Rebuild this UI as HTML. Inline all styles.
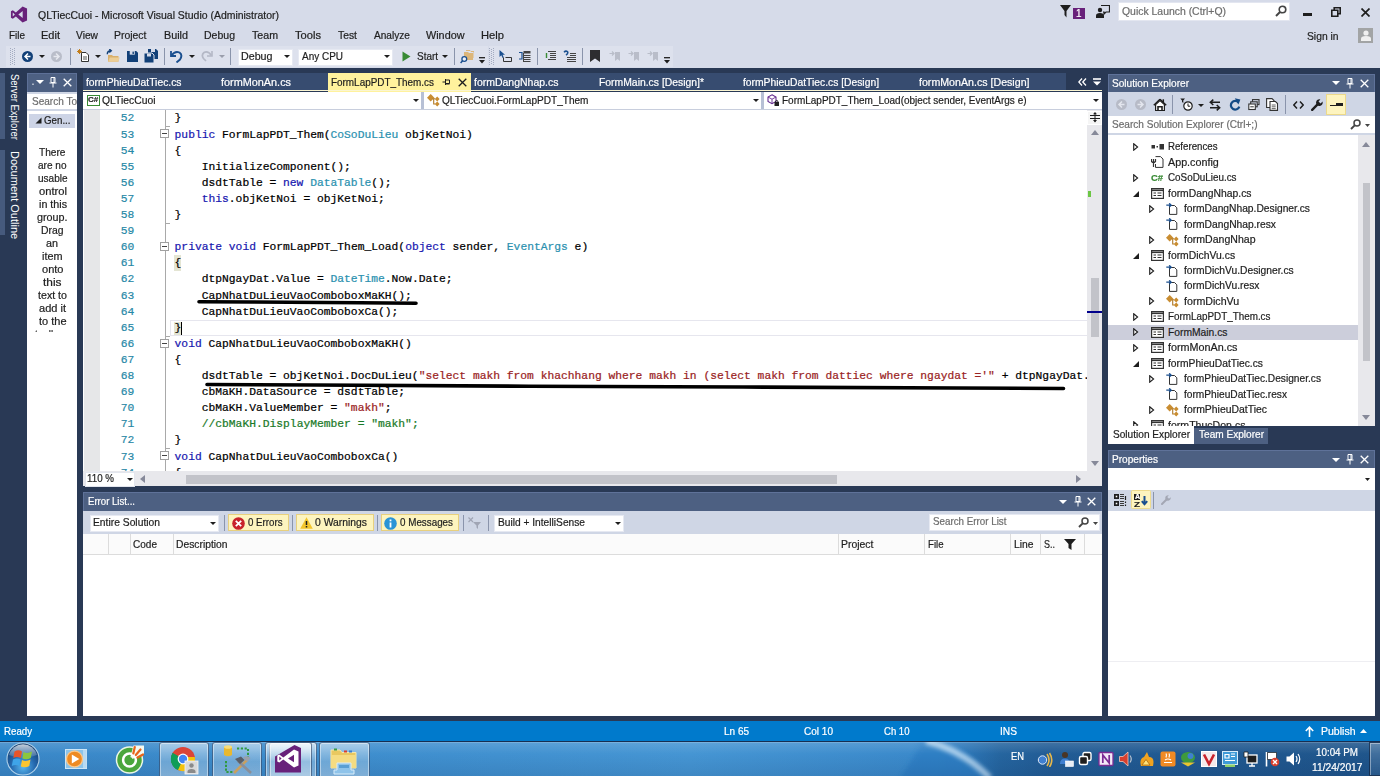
<!DOCTYPE html>
<html><head><meta charset="utf-8"><title>QLTiecCuoi - Microsoft Visual Studio (Administrator)</title>
<style>
*{box-sizing:border-box;margin:0;padding:0}
html,body{width:1380px;height:776px;overflow:hidden;background:#293955}
body{font-family:"Liberation Sans",sans-serif;font-size:11.5px;color:#1e1e1e;position:relative}
.a{position:absolute}
.t{position:absolute;white-space:pre;line-height:16px;height:16px;transform-origin:0 50%;-webkit-text-stroke:0.2px}
.ln{position:absolute;left:101px;width:33.2px;text-align:right;color:#2688a6;font-family:"Liberation Mono",monospace;font-size:11.3px;line-height:16px;height:16px;-webkit-text-stroke:0.2px}
.cl{position:absolute;left:174.6px;font-family:"Liberation Mono",monospace;font-size:11.3px;line-height:16px;height:16px;white-space:pre;color:#000;-webkit-text-stroke:0.22px}
.k{color:#1818b0}.ty{color:#2b91af}.s{color:#9a2323}.c{color:#1a7a28}
.ob{position:absolute;left:160.5px;width:9px;height:9px;border:1px solid #a0a0a0;background:#fff}
.ob:after{content:"";position:absolute;left:1px;top:3px;width:5px;height:1px;background:#444}
</style></head><body>
<div class="a" style="left:0px;top:0px;width:1380px;height:67.5px;background:#d6dbe9;"></div>
<svg class="a" style="left:9.8px;top:6px;" width="18" height="17" viewBox="0 0 19 19"><path d="M13.5 0.5 18.5 2.8V16.2L13.5 18.5 6 11.6 2.6 14.3 0.5 13.2V5.8L2.6 4.7 6 7.4Z M13.6 5.6 8.8 9.5 13.6 13.4Z M2.5 7.4V11.6L4.9 9.5Z" fill="#68217a" fill-rule="evenodd"/></svg>
<span class="t" style="left:37.50px;top:7.75px;color:#1e1e1e;font-size:10.3px;transform:scaleX(1.0156)">QLTiecCuoi - Microsoft Visual Studio (Administrator)</span>
<span class="t" style="left:8.50px;top:27.95px;color:#1e1e1e;font-size:10.3px;transform:scaleX(0.9642)">File</span>
<span class="t" style="left:40.50px;top:27.95px;color:#1e1e1e;font-size:10.3px;transform:scaleX(1.0704)">Edit</span>
<span class="t" style="left:75.50px;top:27.95px;color:#1e1e1e;font-size:10.3px;transform:scaleX(0.9936)">View</span>
<span class="t" style="left:114.00px;top:27.95px;color:#1e1e1e;font-size:10.3px;transform:scaleX(1.0136)">Project</span>
<span class="t" style="left:163.50px;top:27.95px;color:#1e1e1e;font-size:10.3px;transform:scaleX(1.0477)">Build</span>
<span class="t" style="left:204.00px;top:27.95px;color:#1e1e1e;font-size:10.3px;transform:scaleX(1.0216)">Debug</span>
<span class="t" style="left:251.50px;top:27.95px;color:#1e1e1e;font-size:10.3px;transform:scaleX(1.0323)">Team</span>
<span class="t" style="left:294.50px;top:27.95px;color:#1e1e1e;font-size:10.3px;transform:scaleX(1.0812)">Tools</span>
<span class="t" style="left:337.50px;top:27.95px;color:#1e1e1e;font-size:10.3px;transform:scaleX(1.0058)">Test</span>
<span class="t" style="left:373.50px;top:27.95px;color:#1e1e1e;font-size:10.3px;transform:scaleX(0.9825)">Analyze</span>
<span class="t" style="left:426.00px;top:27.95px;color:#1e1e1e;font-size:10.3px;transform:scaleX(1.0512)">Window</span>
<span class="t" style="left:480.50px;top:27.95px;color:#1e1e1e;font-size:10.3px;transform:scaleX(1.0855)">Help</span>
<svg class="a" style="left:1060px;top:5px;" width="12" height="13" viewBox="0 0 12 13"><path d="M0 0H11L6.5 6V12.5L4.5 10V6Z" fill="#1e1e1e"/></svg>
<div class="a" style="left:1073px;top:8px;width:12px;height:11px;background:#68217a;"></div>
<span class="t" style="left:1076.00px;top:5.95px;color:#fff;font-size:10px;transform:scaleX(0.9888)">1</span>
<svg class="a" style="left:1096px;top:5px;" width="14" height="13" viewBox="0 0 14 13"><path d="M5 0.5H13.5V7H10L8 9V7H7" fill="none" stroke="#1e1e1e" stroke-width="1.2"/><circle cx="4" cy="5" r="2.2" fill="#1e1e1e"/><path d="M0 13V10.5Q0 8 4 8Q8 8 8 10.5V13Z" fill="#1e1e1e"/></svg>
<div class="a" style="left:1118px;top:2px;width:172px;height:19px;background:#fff;border:1px solid #e3e6f0"></div>
<span class="t" style="left:1122.00px;top:4.25px;color:#6d6d6d;font-size:10.3px;transform:scaleX(1.0125)">Quick Launch (Ctrl+Q)</span>
<svg class="a" style="left:1275px;top:5px;" width="12" height="12" viewBox="0 0 12 12"><circle cx="7.5" cy="4.5" r="3.3" fill="none" stroke="#444" stroke-width="1.6"/><path d="M5 7L1 11" stroke="#444" stroke-width="2"/></svg>
<div class="a" style="left:1303px;top:13px;width:8.5px;height:2.5px;background:#1e1e1e;"></div>
<svg class="a" style="left:1331px;top:7px;" width="10" height="10" viewBox="0 0 10 10"><path d="M0.8 3.2H6.8V9.2H0.8Z M3.2 3V0.8H9.2V6.8H7" fill="none" stroke="#1e1e1e" stroke-width="1.6"/></svg>
<svg class="a" style="left:1361px;top:8px;" width="9" height="9" viewBox="0 0 9 9"><path d="M0.5 0.5 8.5 8.5M8.5 0.5 0.5 8.5" stroke="#1e1e1e" stroke-width="1.7"/></svg>
<span class="t" style="left:1306.50px;top:29.05px;color:#1e1e1e;font-size:10.3px;transform:scaleX(1.0005)">Sign in</span>
<div class="a" style="left:1358px;top:28px;width:15px;height:15px;background:#a2a4a5;"></div>
<svg class="a" style="left:1358px;top:28px;" width="15" height="15" viewBox="0 0 15 15"><circle cx="8" cy="5" r="2.6" fill="#f0f0f0"/><path d="M3 13V10.5Q3 8 8 8Q13 8 13 10.5V13Z" fill="#f0f0f0"/></svg>
<div class="a" style="left:6px;top:46px;width:482px;height:21px;background:#dde1ed;"></div>
<div class="a" style="left:488.5px;top:46px;width:184px;height:21px;background:#dde1ed;"></div>
<svg class="a" style="left:10px;top:48px;" width="5" height="17" viewBox="0 0 5 17"><path d="M0.5 0V17M4.5 0V17" stroke="#a3abc0" stroke-width="1" stroke-dasharray="1 1"/><path d="M2.5 1V17" stroke="#a3abc0" stroke-width="1" stroke-dasharray="1 1"/></svg>
<svg class="a" style="left:489px;top:48px;" width="5" height="17" viewBox="0 0 5 17"><path d="M0.5 0V17M4.5 0V17" stroke="#a3abc0" stroke-width="1" stroke-dasharray="1 1"/><path d="M2.5 1V17" stroke="#a3abc0" stroke-width="1" stroke-dasharray="1 1"/></svg>
<svg class="a" style="left:22px;top:50.5px;" width="11" height="11" viewBox="0 0 11 11"><circle cx="5.5" cy="5.5" r="5.5" fill="#124078"/><path d="M6 2.5 3 5.5 6 8.5M3.2 5.5H8.5" stroke="#fff" stroke-width="1.5" fill="none"/></svg>
<svg class="a" style="left:39.0px;top:55.0px;" width="6" height="3" viewBox="0 0 6 3"><path d="M0 0H6L3.0 3Z" fill="#1e1e1e"/></svg>
<svg class="a" style="left:51px;top:50.5px;" width="11" height="11" viewBox="0 0 11 11"><circle cx="5.5" cy="5.5" r="5.5" fill="#b9bdc9"/><path d="M5 2.5 8 5.5 5 8.5M7.8 5.5H2.5" stroke="#e6e8ef" stroke-width="1.5" fill="none"/></svg>
<div class="a" style="left:69.5px;top:48px;width:1px;height:17px;background:#8a94ab;"></div>
<svg class="a" style="left:77px;top:49px;" width="13" height="14" viewBox="0 0 13 14"><path d="M4.5 3.5H9L11.5 6V12.5H4.5Z" fill="#fff" stroke="#333" stroke-width="1"/><path d="M6 8H10M6 10H10" stroke="#555" stroke-width="1"/><path d="M2.5 0V5M0 2.5H5M0.8 0.8 4.2 4.2M4.2 0.8 0.8 4.2" stroke="#c27d1a" stroke-width="1"/></svg>
<svg class="a" style="left:95.0px;top:55.0px;" width="6" height="3" viewBox="0 0 6 3"><path d="M0 0H6L3.0 3Z" fill="#1e1e1e"/></svg>
<svg class="a" style="left:106px;top:49px;" width="14" height="14" viewBox="0 0 14 14"><path d="M2 6H6L7 7H12.5V12.8H2Z" fill="#d9b06c"/><path d="M3.8 8.5H13.8L12 12.8H2Z" fill="#ecce96"/><path d="M1.3 5.2Q1.3 1.8 5 1.8M3.3 0 5.3 1.8 3.3 3.6" fill="none" stroke="#124078" stroke-width="1.4"/></svg>
<svg class="a" style="left:127px;top:50.5px;" width="11" height="11" viewBox="0 0 12 12"><path d="M0 0H10L12 2V12H0Z" fill="#124078"/><rect x="3" y="0" width="5.5" height="4" fill="#d6dbe9"/><rect x="6" y="0.7" width="1.5" height="2.6" fill="#124078"/><rect x="2.5" y="7" width="7" height="5" fill="#124078"/></svg>
<svg class="a" style="left:144px;top:49px;" width="14" height="14" viewBox="0 0 14 14"><path d="M4 0H12L14 2V10H4Z" fill="#124078"/><rect x="7" y="0" width="4" height="3" fill="#d6dbe9"/><path d="M0 4H8L10 6V14H0Z" fill="#124078" stroke="#dde1ed" stroke-width="1"/><rect x="3" y="4.5" width="4" height="3" fill="#d6dbe9"/></svg>
<div class="a" style="left:163.5px;top:48px;width:1px;height:17px;background:#8a94ab;"></div>
<svg class="a" style="left:170px;top:49.5px;" width="13" height="13" viewBox="0 0 13 13"><path d="M1 1V6H6" fill="none" stroke="#1a4f8f" stroke-width="1.8"/><path d="M1.5 5.5Q5 0.5 9.5 2.5Q13 5 10 9.5L6.5 12.5" fill="none" stroke="#1a4f8f" stroke-width="1.9"/></svg>
<svg class="a" style="left:189.0px;top:55.0px;" width="6" height="3" viewBox="0 0 6 3"><path d="M0 0H6L3.0 3Z" fill="#1e1e1e"/></svg>
<svg class="a" style="left:201px;top:50px;" width="12" height="12" viewBox="0 0 12 12"><path d="M11 1V6H6" fill="none" stroke="#b4b8c6" stroke-width="1.6"/><path d="M10.5 5.5Q7 0.5 3 2.5Q0 5 2.5 8.5L5 11" fill="none" stroke="#b4b8c6" stroke-width="1.7"/></svg>
<svg class="a" style="left:219.0px;top:55.0px;" width="6" height="3" viewBox="0 0 6 3"><path d="M0 0H6L3.0 3Z" fill="#9a9eac"/></svg>
<div class="a" style="left:230px;top:48px;width:1px;height:17px;background:#8a94ab;"></div>
<div class="a" style="left:237.5px;top:48.5px;width:55px;height:17px;background:#fff;border:1px solid #e6e9f2"></div>
<span class="t" style="left:240.50px;top:49.05px;color:#1e1e1e;font-size:10.3px;transform:scaleX(1.0381)">Debug</span>
<svg class="a" style="left:284.0px;top:55.0px;" width="6" height="3" viewBox="0 0 6 3"><path d="M0 0H6L3.0 3Z" fill="#1e1e1e"/></svg>
<div class="a" style="left:298px;top:48.5px;width:95px;height:17px;background:#fff;border:1px solid #e6e9f2"></div>
<span class="t" style="left:301.50px;top:49.05px;color:#1e1e1e;font-size:10.3px;transform:scaleX(0.9679)">Any CPU</span>
<svg class="a" style="left:384.0px;top:55.0px;" width="6" height="3" viewBox="0 0 6 3"><path d="M0 0H6L3.0 3Z" fill="#1e1e1e"/></svg>
<svg class="a" style="left:402px;top:51px;" width="9" height="11" viewBox="0 0 9 11"><path d="M0.5 0.5 8.5 5.5 0.5 10.5Z" fill="#388a34"/></svg>
<span class="t" style="left:416.50px;top:49.05px;color:#1e1e1e;font-size:10.3px;transform:scaleX(0.9655)">Start</span>
<svg class="a" style="left:442.0px;top:55.0px;" width="6" height="3" viewBox="0 0 6 3"><path d="M0 0H6L3.0 3Z" fill="#1e1e1e"/></svg>
<div class="a" style="left:453.5px;top:48px;width:1px;height:17px;background:#8a94ab;"></div>
<svg class="a" style="left:460px;top:49.5px;" width="14" height="14" viewBox="0 0 14 14"><path d="M4 2H8L9 3H13V10H4Z" fill="#dcb67a"/><path d="M6 0.5H10L11 1.5H14V8" fill="none" stroke="#dcb67a" stroke-width="1"/><circle cx="4.3" cy="9" r="2.4" fill="#eef1f8" stroke="#1a4f8f" stroke-width="1.3"/><path d="M2.6 10.8 0.6 13" stroke="#1a4f8f" stroke-width="1.5"/></svg>
<svg class="a" style="left:479px;top:57px;" width="6" height="7" viewBox="0 0 6 7"><path d="M0 0.7H6" stroke="#1e1e1e" stroke-width="1.3"/><path d="M0 3H6L3 6.5Z" fill="#1e1e1e"/></svg>
<svg class="a" style="left:499px;top:49.5px;" width="13" height="13" viewBox="0 0 13 13"><path d="M0.5 0 0.5 7 2.3 5.2 3.6 8 4.8 7.4 3.6 4.8 6 4.8Z" fill="#1a4f8f"/><path d="M4.5 7.5V11.5H12.5V7.5H6.5" fill="none" stroke="#333" stroke-width="1"/></svg>
<svg class="a" style="left:518px;top:49.5px;" width="13" height="13" viewBox="0 0 13 13"><path d="M1 2.5H4V9H1" fill="none" stroke="#1a4f8f" stroke-width="1.2"/><rect x="5.5" y="1" width="7" height="2.5" fill="#444"/><path d="M6 5.5H12.5M6 7.5H12.5M6 9.5H12.5M6 11.5H12.5" stroke="#444" stroke-width="1"/><path d="M5.5 3V12" stroke="#444" stroke-width="1"/></svg>
<div class="a" style="left:537px;top:48px;width:1px;height:17px;background:#8a94ab;"></div>
<svg class="a" style="left:545px;top:50px;" width="11" height="12" viewBox="0 0 11 12"><path d="M3 1.5H11M5 3.5H11M5 5.5H11M5 7.5H11M3 9.5H11" stroke="#444" stroke-width="1"/><path d="M1.5 3V8" stroke="#388a34" stroke-width="1.4"/></svg>
<svg class="a" style="left:563px;top:49.5px;" width="13" height="13" viewBox="0 0 13 13"><path d="M1 2.2Q2.8 0.2 4.6 1.8Q5.4 3.4 3 5.2" fill="none" stroke="#1a4f8f" stroke-width="1.5"/><path d="M7 3.5H13M7 5.5H13M4 7.5H13M4 9.5H13M4 11.5H13" stroke="#444" stroke-width="1"/></svg>
<div class="a" style="left:581.5px;top:48px;width:1px;height:17px;background:#8a94ab;"></div>
<svg class="a" style="left:590px;top:50px;" width="10" height="12" viewBox="0 0 10 12"><path d="M0 0H10V12L5 8.5 0 12Z" fill="#2d2d30"/></svg>
<svg class="a" style="left:609px;top:50px;" width="11" height="11" viewBox="0 0 11 11"><path d="M6 2V11L8.5 9 11 11V2Z" fill="#b9bdc9"/><path d="M0.5 3.5H5M3 1.5 5 3.5 3 5.5" fill="none" stroke="#b9bdc9" stroke-width="1.2"/></svg>
<svg class="a" style="left:628px;top:50px;" width="11" height="11" viewBox="0 0 11 11"><path d="M6 2V11L8.5 9 11 11V2Z" fill="#b9bdc9"/><path d="M0.5 3.5H5M3 1.5 5 3.5 3 5.5" fill="none" stroke="#b9bdc9" stroke-width="1.2"/></svg>
<svg class="a" style="left:647px;top:50px;" width="11" height="11" viewBox="0 0 11 11"><path d="M6 2V11L8.5 9 11 11V2Z" fill="#b9bdc9"/><path d="M0.5 3.5H5M3 1.5 5 3.5 3 5.5" fill="none" stroke="#b9bdc9" stroke-width="1.2"/></svg>
<svg class="a" style="left:664px;top:57px;" width="6" height="7" viewBox="0 0 6 7"><path d="M0 0.7H6" stroke="#1e1e1e" stroke-width="1.3"/><path d="M0 3H6L3 6.5Z" fill="#1e1e1e"/></svg>
<div class="a" style="left:0px;top:72.5px;width:5px;height:66.5px;background:#465a7d;"></div>
<div class="a" style="left:0px;top:149.8px;width:5px;height:85px;background:#465a7d;"></div>
<span class="a" style="left:21.5px;top:73.5px;white-space:nowrap;color:#fff;font-size:10.3px;line-height:16px;height:16px;transform-origin:0 0;transform:rotate(90deg) scaleX(0.92)">Server Explorer</span>
<span class="a" style="left:21.5px;top:150.5px;white-space:nowrap;color:#fff;font-size:10.3px;line-height:16px;height:16px;transform-origin:0 0;transform:rotate(90deg) scaleX(1.07)">Document Outline</span>
<div class="a" style="left:27px;top:73.5px;width:50.4px;height:642.7px;background:#fff;"></div>
<div class="a" style="left:27px;top:73.2px;width:50.4px;height:18.8px;background:#4d6082;border:1px solid #5d7097;border-bottom:0"></div>
<span class="t" style="left:31.50px;top:74.45px;color:#fff;font-size:10.3px;transform:scaleX(0.6957)">.</span>
<svg class="a" style="left:35.5px;top:80.0px;" width="8" height="4" viewBox="0 0 8 4"><path d="M0 0H8L4.0 4Z" fill="#fff"/></svg>
<svg class="a" style="left:49px;top:77px;" width="8" height="11" viewBox="0 0 8 11"><path d="M2 0.5H6V5.5H2ZM5 0.5V5.5M0.5 6H7.5M4 6V10.5" stroke="#fff" stroke-width="1" fill="none"/></svg>
<svg class="a" style="left:63px;top:78px;" width="9" height="9" viewBox="0 0 9 9"><path d="M0.7 0.7 8.3 8.3M8.3 0.7 0.7 8.3" stroke="#fff" stroke-width="1.3"/></svg>
<div class="a" style="left:27px;top:92px;width:50.4px;height:1.5px;background:#cfd6e5;"></div>
<span class="t" style="left:31.50px;top:94.05px;color:#6d6d6d;font-size:10.3px;transform:scaleX(0.9743)">Search To</span>
<div class="a" style="left:27px;top:109px;width:50.4px;height:2px;background:#cfd6e5;"></div>
<div class="a" style="left:29px;top:113.5px;width:45.8px;height:14.5px;background:#cdd4e6;"></div>
<svg class="a" style="left:35px;top:117px;" width="7" height="7" viewBox="0 0 7 7"><path d="M6.5 0.5V6.5H0.5Z" fill="#1e1e1e"/></svg>
<span class="t" style="left:43.50px;top:113.45px;color:#1e1e1e;font-size:10.3px;transform:scaleX(0.9448)">Gen...</span>
<span class="t" style="left:39.00px;top:145.45px;color:#1e1e1e;font-size:10.3px;transform:scaleX(0.9849)">There</span>
<span class="t" style="left:38.00px;top:158.40px;color:#1e1e1e;font-size:10.3px;transform:scaleX(0.9759)">are no</span>
<span class="t" style="left:37.50px;top:171.35px;color:#1e1e1e;font-size:10.3px;transform:scaleX(0.9722)">usable</span>
<span class="t" style="left:38.50px;top:184.30px;color:#1e1e1e;font-size:10.3px;transform:scaleX(1.0867)">ontrol</span>
<span class="t" style="left:38.50px;top:197.25px;color:#1e1e1e;font-size:10.3px;transform:scaleX(1.0407)">in this</span>
<span class="t" style="left:37.00px;top:210.20px;color:#1e1e1e;font-size:10.3px;transform:scaleX(1.0444)">group.</span>
<span class="t" style="left:41.00px;top:223.15px;color:#1e1e1e;font-size:10.3px;transform:scaleX(1.0077)">Drag</span>
<span class="t" style="left:46.00px;top:236.10px;color:#1e1e1e;font-size:10.3px;transform:scaleX(1.0463)">an</span>
<span class="t" style="left:42.00px;top:249.05px;color:#1e1e1e;font-size:10.3px;transform:scaleX(1.0538)">item</span>
<span class="t" style="left:41.50px;top:262.00px;color:#1e1e1e;font-size:10.3px;transform:scaleX(1.0725)">onto</span>
<span class="t" style="left:43.00px;top:274.95px;color:#1e1e1e;font-size:10.3px;transform:scaleX(1.154)">this</span>
<span class="t" style="left:37.50px;top:287.90px;color:#1e1e1e;font-size:10.3px;transform:scaleX(1.034)">text to</span>
<span class="t" style="left:39.00px;top:300.85px;color:#1e1e1e;font-size:10.3px;transform:scaleX(1.0713)">add it</span>
<span class="t" style="left:38.50px;top:313.80px;color:#1e1e1e;font-size:10.3px;transform:scaleX(1.0673)">to the</span>
<div class="a" style="left:28px;top:322px;width:49px;height:9.6px;overflow:hidden"><div class="a" style="left:-28px;top:-322px;width:1380px;height:776px">
<span class="t" style="left:35.00px;top:326.75px;color:#1e1e1e;font-size:10.3px;transform:scaleX(0.9563)">toolbox.</span>
</div></div>
<div class="a" style="left:82.5px;top:73px;width:983.5px;height:17px;background:#374c70;"></div>
<div class="a" style="left:328px;top:73px;width:143.2px;height:18.5px;background:#fff29d;"></div>
<div class="a" style="left:82.5px;top:89.8px;width:1019.5px;height:1.7px;background:#faf5d2;"></div>
<span class="t" style="left:86.00px;top:74.85px;color:#fff;font-size:10.3px;transform:scaleX(1.0033)">formPhieuDatTiec.cs</span>
<span class="t" style="left:221.00px;top:74.85px;color:#fff;font-size:10.3px;transform:scaleX(1.0544)">formMonAn.cs</span>
<span class="t" style="left:474.00px;top:74.85px;color:#fff;font-size:10.3px;transform:scaleX(1.0183)">formDangNhap.cs</span>
<span class="t" style="left:598.50px;top:74.85px;color:#fff;font-size:10.3px;transform:scaleX(1.0083)">FormMain.cs [Design]*</span>
<span class="t" style="left:743.00px;top:74.85px;color:#fff;font-size:10.3px;transform:scaleX(1.0013)">formPhieuDatTiec.cs [Design]</span>
<span class="t" style="left:918.50px;top:74.85px;color:#fff;font-size:10.3px;transform:scaleX(1.0326)">formMonAn.cs [Design]</span>
<span class="t" style="left:331.00px;top:74.85px;color:#1e1e1e;font-size:10.3px;transform:scaleX(0.9625)">FormLapPDT_Them.cs</span>
<svg class="a" style="left:442px;top:78px;" width="9" height="8" viewBox="0 0 9 8"><path d="M0.5 4H3.5M3.5 1V7M3.5 2H7.5V5.5H3.5M3.5 6H7.5" stroke="#1e1e1e" stroke-width="1" fill="none"/></svg>
<svg class="a" style="left:458px;top:77.5px;" width="9" height="9" viewBox="0 0 9 9"><path d="M0.7 0.7 8.3 8.3M8.3 0.7 0.7 8.3" stroke="#1e1e1e" stroke-width="1.3"/></svg>
<svg class="a" style="left:1077.5px;top:78px;" width="9" height="8" viewBox="0 0 9 8"><path d="M4 0.5 0.8 4 4 7.5M8 0.5 4.8 4 8 7.5" stroke="#fff" stroke-width="1.3" fill="none"/></svg>
<svg class="a" style="left:1092.5px;top:78px;" width="8" height="8" viewBox="0 0 8 8"><path d="M0 1H8" stroke="#fff" stroke-width="1.6"/><path d="M0 3.5H8L4 7.5Z" fill="#fff"/></svg>
<div class="a" style="left:82.5px;top:91.5px;width:1019.5px;height:17.5px;background:#fff;"></div>
<div class="a" style="left:82.5px;top:109px;width:1019.5px;height:1.2px;background:#c8cedd;"></div>
<div class="a" style="left:420.5px;top:91.8px;width:3.2px;height:17.5px;background:#b7c0d5;"></div>
<div class="a" style="left:760.5px;top:91.8px;width:3.2px;height:17.5px;background:#b7c0d5;"></div>
<svg class="a" style="left:87px;top:94.5px;" width="13" height="11" viewBox="0 0 13 11"><rect x="0.5" y="0.5" width="12" height="10" fill="#fff" stroke="#388a34" stroke-width="1"/></svg>
<span class="t" style="left:88.30px;top:92.45px;color:#1e1e1e;font-size:7.5px;transform:scaleX(1.0632);font-weight:bold">C#</span>
<span class="t" style="left:101.50px;top:92.95px;color:#1e1e1e;font-size:10.3px;transform:scaleX(1.0053)">QLTiecCuoi</span>
<svg class="a" style="left:412.5px;top:99.0px;" width="6" height="3" viewBox="0 0 6 3"><path d="M0 0H6L3.0 3Z" fill="#1e1e1e"/></svg>
<svg class="a" style="left:427px;top:94px;" width="13" height="13" viewBox="0 0 13 13"><path d="M3.7 0 7.4 3.7 3.7 7.4 0 3.7Z" fill="#c98d31"/><path d="M5.5 4.8H8M6.7 4.8V10H8.2" stroke="#b07a28" stroke-width="1.1" fill="none"/><path d="M10.2 2.6 12.6 5 10.2 7.4 7.8 5Z M10.2 7.6 12.6 10 10.2 12.4 7.8 10Z" fill="#c98d31"/></svg>
<span class="t" style="left:441.50px;top:92.95px;color:#1e1e1e;font-size:10.3px;transform:scaleX(0.9771)">QLTiecCuoi.FormLapPDT_Them</span>
<svg class="a" style="left:753.0px;top:99.0px;" width="6" height="3" viewBox="0 0 6 3"><path d="M0 0H6L3.0 3Z" fill="#1e1e1e"/></svg>
<svg class="a" style="left:767px;top:94px;" width="13" height="13" viewBox="0 0 13 13"><path d="M5 0.8 9 3V7.5L5 9.7 1 7.5V3Z" fill="#fff" stroke="#652d90" stroke-width="1.1"/><path d="M1 3 5 5.2 9 3M5 5.2V9.7" stroke="#652d90" stroke-width="0.9" fill="none"/><rect x="7.5" y="8" width="4.5" height="4" fill="#1e1e1e"/><path d="M8.6 8V7Q9.75 5.8 10.9 7V8" fill="none" stroke="#1e1e1e" stroke-width="0.9"/></svg>
<span class="t" style="left:782.00px;top:92.95px;color:#1e1e1e;font-size:10.3px;transform:scaleX(0.9687)">FormLapPDT_Them_Load(object sender, EventArgs e)</span>
<svg class="a" style="left:1093.0px;top:99.0px;" width="6" height="3" viewBox="0 0 6 3"><path d="M0 0H6L3.0 3Z" fill="#1e1e1e"/></svg>
<div class="a" style="left:82.5px;top:110px;width:1019.5px;height:362px;background:#fff;"></div>
<div class="a" style="left:83.5px;top:110px;width:16.5px;height:362px;background:#e6e7e8;"></div>
<div class="a" style="left:82.5px;top:110.2px;width:1004px;height:361.3px;overflow:hidden"><div class="a" style="left:82.5px;top:0.0px;width:1px;height:361.3px;background:#a9a9a9;"></div><div class="a" style="left:87.0px;top:209.8px;width:920px;height:16.3px;background:#fff;border:1.6px solid #e6e6ee"></div><div class="a" style="left:91.5px;top:145.3px;width:7.2px;height:15.5px;background:#e4e5d3;"></div><div class="a" style="left:91.5px;top:211.40000000000003px;width:7.2px;height:13px;background:#e4e5d3;"></div><div class="a" style="left:98.80000000000001px;top:211.40000000000003px;width:1px;height:13px;background:#000;"></div><div class="a" style="left:82.5px;top:16.299999999999997px;width:4.5px;height:1px;background:#a9a9a9;"></div><div class="a" style="left:82.5px;top:112.90000000000002px;width:4.5px;height:1px;background:#a9a9a9;"></div><div class="a" style="left:82.5px;top:225.60000000000002px;width:4.5px;height:1px;background:#a9a9a9;"></div><div class="a" style="left:82.5px;top:338.3px;width:4.5px;height:1px;background:#a9a9a9;"></div><div class="ln" style="left:18.5px;top:0.30px">52</div><div class="cl" style="left:92.1px;top:0.30px">}</div><div class="ln" style="left:18.5px;top:16.40px">53</div><div class="cl" style="left:92.1px;top:16.40px"><span class="k">public</span> FormLapPDT_Them(<span class="ty">CoSoDuLieu</span> objKetNoi)</div><div class="ln" style="left:18.5px;top:32.50px">54</div><div class="cl" style="left:92.1px;top:32.50px">{</div><div class="ln" style="left:18.5px;top:48.60px">55</div><div class="cl" style="left:92.1px;top:48.60px">    InitializeComponent();</div><div class="ln" style="left:18.5px;top:64.70px">56</div><div class="cl" style="left:92.1px;top:64.70px">    dsdtTable = <span class="k">new</span> <span class="ty">DataTable</span>();</div><div class="ln" style="left:18.5px;top:80.80px">57</div><div class="cl" style="left:92.1px;top:80.80px">    <span class="k">this</span>.objKetNoi = objKetNoi;</div><div class="ln" style="left:18.5px;top:96.90px">58</div><div class="cl" style="left:92.1px;top:96.90px">}</div><div class="ln" style="left:18.5px;top:113.00px">59</div><div class="ln" style="left:18.5px;top:129.10px">60</div><div class="cl" style="left:92.1px;top:129.10px"><span class="k">private</span> <span class="k">void</span> FormLapPDT_Them_Load(<span class="k">object</span> sender, <span class="ty">EventArgs</span> e)</div><div class="ln" style="left:18.5px;top:145.20px">61</div><div class="cl" style="left:92.1px;top:145.20px">{</div><div class="ln" style="left:18.5px;top:161.30px">62</div><div class="cl" style="left:92.1px;top:161.30px">    dtpNgayDat.Value = <span class="ty">DateTime</span>.Now.Date;</div><div class="ln" style="left:18.5px;top:177.40px">63</div><div class="cl" style="left:92.1px;top:177.40px">    CapNhatDuLieuVaoComboboxMaKH();</div><div class="ln" style="left:18.5px;top:193.50px">64</div><div class="cl" style="left:92.1px;top:193.50px">    CapNhatDuLieuVaoComboboxCa();</div><div class="ln" style="left:18.5px;top:209.60px">65</div><div class="cl" style="left:92.1px;top:209.60px">}</div><div class="ln" style="left:18.5px;top:225.70px">66</div><div class="cl" style="left:92.1px;top:225.70px"><span class="k">void</span> CapNhatDuLieuVaoComboboxMaKH()</div><div class="ln" style="left:18.5px;top:241.80px">67</div><div class="cl" style="left:92.1px;top:241.80px">{</div><div class="ln" style="left:18.5px;top:257.90px">68</div><div class="cl" style="left:92.1px;top:257.90px">    dsdtTable = objKetNoi.DocDuLieu(<span class="s">"select makh from khachhang where makh in (select makh from dattiec where ngaydat ='"</span> + dtpNgayDat.</div><div class="ln" style="left:18.5px;top:274.00px">69</div><div class="cl" style="left:92.1px;top:274.00px">    cbMaKH.DataSource = dsdtTable;</div><div class="ln" style="left:18.5px;top:290.10px">70</div><div class="cl" style="left:92.1px;top:290.10px">    cbMaKH.ValueMember = <span class="s">"makh"</span>;</div><div class="ln" style="left:18.5px;top:306.20px">71</div><div class="cl" style="left:92.1px;top:306.20px">    <span class="c">//cbMaKH.DisplayMember = "makh";</span></div><div class="ln" style="left:18.5px;top:322.30px">72</div><div class="cl" style="left:92.1px;top:322.30px">}</div><div class="ln" style="left:18.5px;top:338.40px">73</div><div class="cl" style="left:92.1px;top:338.40px"><span class="k">void</span> CapNhatDuLieuVaoComboboxCa()</div><div class="ln" style="left:18.5px;top:354.50px">74</div><div class="cl" style="left:92.1px;top:354.50px">{</div><div class="ob" style="left:77.4px;top:19.30px"></div><div class="ob" style="left:77.4px;top:132.00px"></div><div class="ob" style="left:77.4px;top:228.60px"></div><div class="ob" style="left:77.4px;top:341.30px"></div></div>
<svg class="a" style="left:190px;top:295px;" width="900" height="100" viewBox="0 0 900 100"><path d="M9 6.7L62 7 170 7.8 226 8.2" stroke="#000" stroke-width="3.6" stroke-linecap="round" fill="none"/><path d="M17 89.5L125 90 339 91.2 553 92 767 93 873.5 93.5" stroke="#000" stroke-width="3.6" stroke-linecap="round" fill="none"/></svg>
<div class="a" style="left:1086.8px;top:110px;width:15.2px;height:362px;background:#e8e8ec;"></div>
<div class="a" style="left:1087px;top:110.5px;width:15px;height:14px;background:#f5f5f5;border:1px solid #fff"></div>
<svg class="a" style="left:1089.5px;top:112px;" width="10" height="11" viewBox="0 0 10 11"><path d="M0 3.5H10M0 6.5H10" stroke="#1e1e1e" stroke-width="1"/><path d="M5 0 7 2.3H3ZM5 10.5 7 8H3Z" fill="#1e1e1e"/><path d="M5 1V9.5" stroke="#1e1e1e" stroke-width="1"/></svg>
<svg class="a" style="left:1090.5px;top:130px;" width="8" height="5" viewBox="0 0 8 5"><path d="M4 0 8 5H0Z" fill="#868999"/></svg>
<svg class="a" style="left:1090.5px;top:461px;" width="8" height="5" viewBox="0 0 8 5"><path d="M4 5 8 0H0Z" fill="#868999"/></svg>
<div class="a" style="left:1088px;top:191px;width:2.5px;height:6px;background:#6cc644;"></div>
<div class="a" style="left:1090.5px;top:278px;width:8px;height:59px;background:#c2c3c9;"></div>
<div class="a" style="left:1087px;top:310.5px;width:14.5px;height:2px;background:#00008b;"></div>
<div class="a" style="left:82.5px;top:471.3px;width:1019.5px;height:15.2px;background:#e8e8ec;"></div>
<div class="a" style="left:84.5px;top:471.5px;width:50px;height:15px;background:#fff;border:1px solid #e3e6ee"></div>
<span class="t" style="left:87.00px;top:471.45px;color:#1e1e1e;font-size:10.3px;transform:scaleX(0.9495)">110 %</span>
<svg class="a" style="left:127.0px;top:478.0px;" width="6" height="3" viewBox="0 0 6 3"><path d="M0 0H6L3.0 3Z" fill="#1e1e1e"/></svg>
<svg class="a" style="left:140px;top:475px;" width="5" height="8" viewBox="0 0 5 8"><path d="M5 0V8L0 4Z" fill="#868999"/></svg>
<svg class="a" style="left:1076px;top:475px;" width="5" height="8" viewBox="0 0 5 8"><path d="M0 0V8L5 4Z" fill="#868999"/></svg>
<div class="a" style="left:186px;top:475px;width:651px;height:8.5px;background:#c2c3c9;"></div>
<div class="a" style="left:82.6px;top:492.3px;width:1019.4px;height:19px;background:#4d6082;border:1px solid #5f7299;border-bottom:0"></div>
<span class="t" style="left:87.50px;top:493.95px;color:#fff;font-size:10.3px;transform:scaleX(0.9333)">Error List...</span>
<svg class="a" style="left:1058.5px;top:500.0px;" width="8" height="4" viewBox="0 0 8 4"><path d="M0 0H8L4.0 4Z" fill="#fff"/></svg>
<svg class="a" style="left:1073.5px;top:496px;" width="8" height="11" viewBox="0 0 8 11"><path d="M2 0.5H6V5.5H2ZM5 0.5V5.5M0.5 6H7.5M4 6V10.5" stroke="#fff" stroke-width="1" fill="none"/></svg>
<svg class="a" style="left:1087px;top:497px;" width="9" height="9" viewBox="0 0 9 9"><path d="M0.7 0.7 8.3 8.3M8.3 0.7 0.7 8.3" stroke="#fff" stroke-width="1.3"/></svg>
<div class="a" style="left:82.6px;top:511px;width:1019.4px;height:23px;background:#cfd6e5;"></div>
<div class="a" style="left:82.6px;top:534px;width:1019.4px;height:182.2px;background:#fff;"></div>
<div class="a" style="left:90px;top:514.5px;width:128.5px;height:17px;background:#fff;border:1px solid #e6e9f2"></div>
<span class="t" style="left:93.00px;top:515.45px;color:#1e1e1e;font-size:10.3px;transform:scaleX(1.0002)">Entire Solution</span>
<svg class="a" style="left:210.0px;top:521.5px;" width="6" height="3" viewBox="0 0 6 3"><path d="M0 0H6L3.0 3Z" fill="#1e1e1e"/></svg>
<div class="a" style="left:224px;top:515px;width:1px;height:16px;background:#8a94ab;"></div>
<div class="a" style="left:228px;top:513.9px;width:61px;height:17.6px;background:#fdf4bf;border:1px solid #e8d07e"></div>
<div class="a" style="left:296px;top:513.9px;width:78px;height:17.6px;background:#fdf4bf;border:1px solid #e8d07e"></div>
<div class="a" style="left:380.5px;top:513.9px;width:78.5px;height:17.6px;background:#fdf4bf;border:1px solid #e8d07e"></div>
<svg class="a" style="left:231.5px;top:516.5px;" width="13" height="13" viewBox="0 0 13 13"><circle cx="6.5" cy="6.5" r="6.3" fill="#c8222b"/><path d="M3.8 3.8 9.2 9.2M9.2 3.8 3.8 9.2" stroke="#fff" stroke-width="1.8"/></svg>
<span class="t" style="left:247.50px;top:515.45px;color:#1e1e1e;font-size:10.3px;transform:scaleX(0.942)">0 Errors</span>
<div class="a" style="left:291.5px;top:515px;width:1px;height:16px;background:#8a94ab;"></div>
<svg class="a" style="left:299.5px;top:516.5px;" width="13" height="12" viewBox="0 0 13 12"><path d="M6.5 0.3 12.8 11.7H0.2Z" fill="#f3c52c"/><path d="M6.5 4V8" stroke="#1e1e1e" stroke-width="1.5"/><rect x="5.75" y="9" width="1.5" height="1.5" fill="#1e1e1e"/></svg>
<span class="t" style="left:315.00px;top:515.45px;color:#1e1e1e;font-size:10.3px;transform:scaleX(1.0057)">0 Warnings</span>
<div class="a" style="left:376.5px;top:515px;width:1px;height:16px;background:#8a94ab;"></div>
<svg class="a" style="left:383.5px;top:516.5px;" width="13" height="13" viewBox="0 0 13 13"><circle cx="6.5" cy="6.5" r="6.3" fill="#2a94d6"/><rect x="5.6" y="5.5" width="1.8" height="5" fill="#fff"/><rect x="5.6" y="2.5" width="1.8" height="1.8" fill="#fff"/></svg>
<span class="t" style="left:399.50px;top:515.45px;color:#1e1e1e;font-size:10.3px;transform:scaleX(0.9544)">0 Messages</span>
<div class="a" style="left:462.5px;top:515px;width:1px;height:16px;background:#8a94ab;"></div>
<svg class="a" style="left:468px;top:517px;" width="13" height="12" viewBox="0 0 13 12"><path d="M0.5 0.5 5 5M5 0.5 0.5 5" stroke="#a0a5b4" stroke-width="1.2"/><path d="M5 5H13L10 8.5V12L8.5 10.5V8.5Z" fill="#a0a5b4"/></svg>
<div class="a" style="left:487.5px;top:515px;width:1px;height:16px;background:#8a94ab;"></div>
<div class="a" style="left:494px;top:514.5px;width:129.5px;height:17px;background:#fff;border:1px solid #e6e9f2"></div>
<span class="t" style="left:497.50px;top:515.45px;color:#1e1e1e;font-size:10.3px;transform:scaleX(0.99)">Build + IntelliSense</span>
<svg class="a" style="left:614.5px;top:521.5px;" width="6" height="3" viewBox="0 0 6 3"><path d="M0 0H6L3.0 3Z" fill="#1e1e1e"/></svg>
<div class="a" style="left:929px;top:513.5px;width:171px;height:17px;background:#fff;border:1px solid #e6e9f2"></div>
<span class="t" style="left:933.00px;top:514.45px;color:#6d6d6d;font-size:10.3px;transform:scaleX(0.9513)">Search Error List</span>
<svg class="a" style="left:1078px;top:516.5px;" width="11" height="11" viewBox="0 0 11 11"><circle cx="7" cy="4" r="3" fill="none" stroke="#444" stroke-width="1.5"/><path d="M4.7 6.3 1 10" stroke="#444" stroke-width="1.9"/></svg>
<svg class="a" style="left:1093.0px;top:521.5px;" width="5" height="3" viewBox="0 0 5 3"><path d="M0 0H5L2.5 3Z" fill="#444"/></svg>
<div class="a" style="left:82.6px;top:534px;width:1019.4px;height:20.5px;background:#fbfbfb;border-bottom:1px solid #dcdcdc"></div>
<div class="a" style="left:107.5px;top:534px;width:1px;height:20.5px;background:#dcdcdc;"></div>
<div class="a" style="left:129.5px;top:534px;width:1px;height:20.5px;background:#dcdcdc;"></div>
<div class="a" style="left:172.5px;top:534px;width:1px;height:20.5px;background:#dcdcdc;"></div>
<div class="a" style="left:837.5px;top:534px;width:1px;height:20.5px;background:#dcdcdc;"></div>
<div class="a" style="left:924px;top:534px;width:1px;height:20.5px;background:#dcdcdc;"></div>
<div class="a" style="left:1010px;top:534px;width:1px;height:20.5px;background:#dcdcdc;"></div>
<div class="a" style="left:1040px;top:534px;width:1px;height:20.5px;background:#dcdcdc;"></div>
<div class="a" style="left:1083.5px;top:534px;width:1px;height:20.5px;background:#dcdcdc;"></div>
<span class="t" style="left:133.00px;top:536.95px;color:#1e1e1e;font-size:10.3px;transform:scaleX(0.9746)">Code</span>
<span class="t" style="left:176.00px;top:536.95px;color:#1e1e1e;font-size:10.3px;transform:scaleX(0.9997)">Description</span>
<span class="t" style="left:841.00px;top:536.95px;color:#1e1e1e;font-size:10.3px;transform:scaleX(1.0136)">Project</span>
<span class="t" style="left:927.50px;top:536.95px;color:#1e1e1e;font-size:10.3px;transform:scaleX(0.9341)">File</span>
<span class="t" style="left:1013.50px;top:536.95px;color:#1e1e1e;font-size:10.3px;transform:scaleX(1.0016)">Line</span>
<span class="t" style="left:1043.50px;top:536.95px;color:#1e1e1e;font-size:10.3px;transform:scaleX(0.8734)">S..</span>
<svg class="a" style="left:1063.5px;top:539px;" width="12" height="11" viewBox="0 0 12 11"><path d="M0 0H12L7.5 5V11L4.5 9V5Z" fill="#1e1e1e"/></svg>
<div class="a" style="left:1107.8px;top:73.5px;width:267.1px;height:18.5px;background:#4d6082;border:1px solid #5f7299;border-bottom:0"></div>
<span class="t" style="left:1112.00px;top:76.05px;color:#fff;font-size:10.3px;transform:scaleX(0.9819)">Solution Explorer</span>
<svg class="a" style="left:1331.5px;top:81.0px;" width="8" height="4" viewBox="0 0 8 4"><path d="M0 0H8L4.0 4Z" fill="#fff"/></svg>
<svg class="a" style="left:1345.5px;top:77.5px;" width="8" height="11" viewBox="0 0 8 11"><path d="M2 0.5H6V5.5H2ZM5 0.5V5.5M0.5 6H7.5M4 6V10.5" stroke="#fff" stroke-width="1" fill="none"/></svg>
<svg class="a" style="left:1359.5px;top:78.5px;" width="9" height="9" viewBox="0 0 9 9"><path d="M0.7 0.7 8.3 8.3M8.3 0.7 0.7 8.3" stroke="#fff" stroke-width="1.3"/></svg>
<div class="a" style="left:1107.8px;top:92px;width:267.1px;height:25px;background:#cfd6e5;"></div>
<svg class="a" style="left:1115.5px;top:99px;" width="11" height="11" viewBox="0 0 11 11"><circle cx="5.5" cy="5.5" r="5.5" fill="#b7bbc7"/><path d="M6 2.5 3 5.5 6 8.5M3.2 5.5H8.5" stroke="#e3e6ee" stroke-width="1.5" fill="none"/></svg>
<svg class="a" style="left:1134.5px;top:99px;" width="11" height="11" viewBox="0 0 11 11"><circle cx="5.5" cy="5.5" r="5.5" fill="#b7bbc7"/><path d="M5 2.5 8 5.5 5 8.5M7.8 5.5H2.5" stroke="#e3e6ee" stroke-width="1.5" fill="none"/></svg>
<svg class="a" style="left:1152.5px;top:97.5px;" width="14" height="13" viewBox="0 0 14 13"><path d="M7 1.2 13.2 7.2M7 1.2 0.8 7.2" stroke="#1e1e1e" stroke-width="1.5" fill="none"/><path d="M2.6 6.6 7 2.6 11.4 6.6V12.5H2.6Z" fill="#fff" stroke="#1e1e1e" stroke-width="1.2"/><path d="M4.2 12V8H9.8V12H8.2V9.6H5.8V12Z" fill="#1e1e1e"/><path d="M10.3 1.3V4" stroke="#1e1e1e" stroke-width="1.5"/></svg>
<div class="a" style="left:1171.5px;top:95px;width:1px;height:19px;background:#8a94ab;"></div>
<svg class="a" style="left:1180px;top:97.5px;" width="13" height="13" viewBox="0 0 13 13"><path d="M0.3 0.5H5L3.3 2.6V5L2 4V2.6Z" fill="#1e1e1e"/><circle cx="8" cy="8" r="4.2" fill="#fff" stroke="#1e1e1e" stroke-width="1.2"/><path d="M8 5.5V8.2H10.2" stroke="#1e1e1e" stroke-width="1" fill="none"/></svg>
<svg class="a" style="left:1197.5px;top:103.5px;" width="6" height="3" viewBox="0 0 6 3"><path d="M0 0H6L3.0 3Z" fill="#1e1e1e"/></svg>
<svg class="a" style="left:1209px;top:98.5px;" width="12" height="12" viewBox="0 0 12 12"><path d="M11 3.3H1.5M4.3 0.6 1.3 3.3 4.3 6" stroke="#1e1e1e" stroke-width="1.5" fill="none"/><path d="M1 8.7H10.5M7.7 6 10.7 8.7 7.7 11.4" stroke="#1e1e1e" stroke-width="1.5" fill="none"/></svg>
<svg class="a" style="left:1228.5px;top:97.5px;" width="12" height="13" viewBox="0 0 12 13"><path d="M9.6 4.6A4.3 4.3 0 1 0 10.3 8.6" stroke="#134a86" stroke-width="2.2" fill="none"/><path d="M5.8 0.2 11.4 1.4 9.4 6.4Z" fill="#134a86"/></svg>
<svg class="a" style="left:1248px;top:98.5px;" width="12" height="12" viewBox="0 0 12 12"><rect x="4.5" y="0.6" width="6.5" height="5" fill="#cfd6e5" stroke="#333" stroke-width="1.1"/><rect x="2.7" y="2.8" width="6.5" height="5" fill="#cfd6e5" stroke="#333" stroke-width="1.1"/><rect x="0.8" y="5" width="6.5" height="5.5" fill="#fff" stroke="#333" stroke-width="1.1"/><path d="M2.3 7.8H5.8" stroke="#333" stroke-width="1"/></svg>
<svg class="a" style="left:1266px;top:97.5px;" width="13" height="13" viewBox="0 0 13 13"><path d="M0.6 0.6H6L8 2.6V9.5H0.6Z" fill="#fff" stroke="#333" stroke-width="1.1"/><path d="M4 3.5H9.5L11.5 5.5V12.4H4Z" fill="#fff" stroke="#333" stroke-width="1.1"/><path d="M5.7 7H9.7M5.7 8.8H9.7M5.7 10.6H9.7" stroke="#555" stroke-width="0.9"/></svg>
<div class="a" style="left:1284.5px;top:95px;width:1px;height:19px;background:#8a94ab;"></div>
<svg class="a" style="left:1292.5px;top:100.5px;" width="11" height="8" viewBox="0 0 11 8"><path d="M4 0.6 0.8 4 4 7.4M7 0.6 10.2 4 7 7.4" stroke="#1e1e1e" stroke-width="1.5" fill="none"/></svg>
<svg class="a" style="left:1311px;top:98.5px;" width="12" height="12" viewBox="0 0 12 12"><path d="M1.2 10.8 6.3 5.7" stroke="#1e1e1e" stroke-width="2.4" stroke-linecap="round"/><path d="M11.5 2.6 9.6 4.5 7.5 2.4 9.4 0.5A3.3 3.3 0 1 0 11.5 2.6Z" fill="#1e1e1e"/></svg>
<div class="a" style="left:1326px;top:94.3px;width:20px;height:20.3px;background:#fdf4bf;border:1px solid #ecd98a"></div>
<div class="a" style="left:1330px;top:104.7px;width:6px;height:1.4px;background:#1e1e1e;"></div>
<div class="a" style="left:1336px;top:103px;width:6.5px;height:3.2px;background:#1e1e1e;"></div>
<div class="a" style="left:1107.8px;top:116.4px;width:267.1px;height:17px;background:#fff;"></div>
<div class="a" style="left:1107.8px;top:133.3px;width:267.1px;height:1.3px;background:#cfd6e5;"></div>
<span class="t" style="left:1112.00px;top:117.45px;color:#6d6d6d;font-size:10.3px;transform:scaleX(0.9797)">Search Solution Explorer (Ctrl+;)</span>
<svg class="a" style="left:1350px;top:119.3px;" width="11" height="11" viewBox="0 0 11 11"><circle cx="7" cy="4" r="3" fill="none" stroke="#444" stroke-width="1.5"/><path d="M4.7 6.3 1 10" stroke="#444" stroke-width="1.9"/></svg>
<svg class="a" style="left:1365.2px;top:123.8px;" width="5" height="3" viewBox="0 0 5 3"><path d="M0 0H5L2.5 3Z" fill="#444"/></svg>
<div class="a" style="left:1107.8px;top:134.5px;width:267.1px;height:291.5px;background:#fff;"></div>
<div class="a" style="left:1107.8px;top:134.5px;width:250px;height:291.5px;overflow:hidden"><div class="a" style="left:-1107.8px;top:-134.5px;width:1380px;height:776px">
<div class="a" style="left:1107.8px;top:325px;width:250px;height:15px;background:#cccedb;"></div>
<svg class="a" style="left:1133.0px;top:142.85px;" width="6" height="8" viewBox="0 0 6 8"><path d="M0.7 0.8 4.6 4 0.7 7.2Z" fill="#fff" stroke="#1e1e1e" stroke-width="1.1"/></svg>
<svg class="a" style="left:1150.5px;top:143.85px;" width="13" height="6" viewBox="0 0 13 6"><rect x="0.5" y="1" width="3.5" height="3.5" fill="#333"/><rect x="5.5" y="2" width="1.5" height="1.5" fill="#333"/><rect x="8.5" y="0" width="4.5" height="5.5" fill="#333"/></svg>
<span class="t" style="left:1168.00px;top:139.30px;color:#1e1e1e;font-size:10.3px;transform:scaleX(0.9401)">References</span>
<svg class="a" style="left:1150.5px;top:156.31px;" width="13" height="12" viewBox="0 0 13 12"><path d="M4.5 0.6H9.5L12 3V11.4H4.5V8" fill="#fff" stroke="#333" stroke-width="1"/><path d="M2.5 3V11M0.5 3V5.5Q2.5 7.5 4.5 5.5V3" stroke="#333" stroke-width="1.2" fill="none"/></svg>
<span class="t" style="left:1168.00px;top:154.76px;color:#1e1e1e;font-size:10.3px;transform:scaleX(1.0437)">App.config</span>
<svg class="a" style="left:1133.0px;top:173.76999999999998px;" width="6" height="8" viewBox="0 0 6 8"><path d="M0.7 0.8 4.6 4 0.7 7.2Z" fill="#fff" stroke="#1e1e1e" stroke-width="1.1"/></svg>
<span class="t" style="left:1151.00px;top:170.22px;color:#388a34;font-size:9px;transform:scaleX(1.0421);font-weight:bold">C#</span>
<span class="t" style="left:1168.00px;top:170.22px;color:#1e1e1e;font-size:10.3px;transform:scaleX(0.9574)">CoSoDuLieu.cs</span>
<svg class="a" style="left:1132.5px;top:190.73px;" width="6" height="6" viewBox="0 0 6 6"><path d="M6 0V6H0Z" fill="#1e1e1e"/></svg>
<svg class="a" style="left:1150.5px;top:187.73px;" width="13" height="11" viewBox="0 0 13 11"><rect x="0.6" y="0.6" width="11.8" height="9.8" fill="#fff" stroke="#333" stroke-width="1.2"/><path d="M0.6 2.3H12.4" stroke="#333" stroke-width="1.6"/><path d="M2.5 5H5M6.5 5H10.5M2.5 7.5H5M6.5 7.5H10.5" stroke="#333" stroke-width="1.2"/></svg>
<span class="t" style="left:1168.00px;top:185.68px;color:#1e1e1e;font-size:10.3px;transform:scaleX(1.0062)">formDangNhap.cs</span>
<svg class="a" style="left:1148.5px;top:204.69px;" width="6" height="8" viewBox="0 0 6 8"><path d="M0.7 0.8 4.6 4 0.7 7.2Z" fill="#fff" stroke="#1e1e1e" stroke-width="1.1"/></svg>
<svg class="a" style="left:1166.0px;top:202.69px;" width="12" height="12" viewBox="0 0 12 12"><path d="M3.5 2.5H8.5L10.8 4.8V11.4H3.5Z" fill="#fff" stroke="#333" stroke-width="1"/><path d="M0.3 2.2H5M3.2 0.3 5.2 2.2 3.2 4.1" stroke="#1a4f8f" stroke-width="1.3" fill="none"/></svg>
<span class="t" style="left:1183.50px;top:201.14px;color:#1e1e1e;font-size:10.3px;transform:scaleX(0.9962)">formDangNhap.Designer.cs</span>
<svg class="a" style="left:1166.0px;top:218.15px;" width="12" height="12" viewBox="0 0 12 12"><path d="M3.5 2.5H8.5L10.8 4.8V11.4H3.5Z" fill="#fff" stroke="#333" stroke-width="1"/><path d="M0.3 2.2H5M3.2 0.3 5.2 2.2 3.2 4.1" stroke="#1a4f8f" stroke-width="1.3" fill="none"/></svg>
<span class="t" style="left:1183.50px;top:216.60px;color:#1e1e1e;font-size:10.3px;transform:scaleX(0.9985)">formDangNhap.resx</span>
<svg class="a" style="left:1148.5px;top:235.61px;" width="6" height="8" viewBox="0 0 6 8"><path d="M0.7 0.8 4.6 4 0.7 7.2Z" fill="#fff" stroke="#1e1e1e" stroke-width="1.1"/></svg>
<svg class="a" style="left:1166.0px;top:233.61px;" width="13" height="13" viewBox="0 0 13 13"><path d="M3.7 0 7.4 3.7 3.7 7.4 0 3.7Z" fill="#c98d31"/><path d="M5.5 4.8H8M6.7 4.8V10H8.2" stroke="#b07a28" stroke-width="1.1" fill="none"/><path d="M10.2 2.6 12.6 5 10.2 7.4 7.8 5Z M10.2 7.6 12.6 10 10.2 12.4 7.8 10Z" fill="#c98d31"/></svg>
<span class="t" style="left:1183.50px;top:232.06px;color:#1e1e1e;font-size:10.3px;transform:scaleX(1.0239)">formDangNhap</span>
<svg class="a" style="left:1132.5px;top:252.57px;" width="6" height="6" viewBox="0 0 6 6"><path d="M6 0V6H0Z" fill="#1e1e1e"/></svg>
<svg class="a" style="left:1150.5px;top:249.57px;" width="13" height="11" viewBox="0 0 13 11"><rect x="0.6" y="0.6" width="11.8" height="9.8" fill="#fff" stroke="#333" stroke-width="1.2"/><path d="M0.6 2.3H12.4" stroke="#333" stroke-width="1.6"/><path d="M2.5 5H5M6.5 5H10.5M2.5 7.5H5M6.5 7.5H10.5" stroke="#333" stroke-width="1.2"/></svg>
<span class="t" style="left:1168.00px;top:247.52px;color:#1e1e1e;font-size:10.3px;transform:scaleX(1.0078)">formDichVu.cs</span>
<svg class="a" style="left:1148.5px;top:266.53px;" width="6" height="8" viewBox="0 0 6 8"><path d="M0.7 0.8 4.6 4 0.7 7.2Z" fill="#fff" stroke="#1e1e1e" stroke-width="1.1"/></svg>
<svg class="a" style="left:1166.0px;top:264.53px;" width="12" height="12" viewBox="0 0 12 12"><path d="M3.5 2.5H8.5L10.8 4.8V11.4H3.5Z" fill="#fff" stroke="#333" stroke-width="1"/><path d="M0.3 2.2H5M3.2 0.3 5.2 2.2 3.2 4.1" stroke="#1a4f8f" stroke-width="1.3" fill="none"/></svg>
<span class="t" style="left:1183.50px;top:262.98px;color:#1e1e1e;font-size:10.3px;transform:scaleX(0.9966)">formDichVu.Designer.cs</span>
<svg class="a" style="left:1166.0px;top:279.99px;" width="12" height="12" viewBox="0 0 12 12"><path d="M3.5 2.5H8.5L10.8 4.8V11.4H3.5Z" fill="#fff" stroke="#333" stroke-width="1"/><path d="M0.3 2.2H5M3.2 0.3 5.2 2.2 3.2 4.1" stroke="#1a4f8f" stroke-width="1.3" fill="none"/></svg>
<span class="t" style="left:1183.50px;top:278.44px;color:#1e1e1e;font-size:10.3px;transform:scaleX(0.9958)">formDichVu.resx</span>
<svg class="a" style="left:1148.5px;top:297.45000000000005px;" width="6" height="8" viewBox="0 0 6 8"><path d="M0.7 0.8 4.6 4 0.7 7.2Z" fill="#fff" stroke="#1e1e1e" stroke-width="1.1"/></svg>
<svg class="a" style="left:1166.0px;top:295.45000000000005px;" width="13" height="13" viewBox="0 0 13 13"><path d="M3.7 0 7.4 3.7 3.7 7.4 0 3.7Z" fill="#c98d31"/><path d="M5.5 4.8H8M6.7 4.8V10H8.2" stroke="#b07a28" stroke-width="1.1" fill="none"/><path d="M10.2 2.6 12.6 5 10.2 7.4 7.8 5Z M10.2 7.6 12.6 10 10.2 12.4 7.8 10Z" fill="#c98d31"/></svg>
<span class="t" style="left:1183.50px;top:293.90px;color:#1e1e1e;font-size:10.3px;transform:scaleX(1.0336)">formDichVu</span>
<svg class="a" style="left:1133.0px;top:312.90999999999997px;" width="6" height="8" viewBox="0 0 6 8"><path d="M0.7 0.8 4.6 4 0.7 7.2Z" fill="#fff" stroke="#1e1e1e" stroke-width="1.1"/></svg>
<svg class="a" style="left:1150.5px;top:311.40999999999997px;" width="13" height="11" viewBox="0 0 13 11"><rect x="0.6" y="0.6" width="11.8" height="9.8" fill="#fff" stroke="#333" stroke-width="1.2"/><path d="M0.6 2.3H12.4" stroke="#333" stroke-width="1.6"/><path d="M2.5 5H5M6.5 5H10.5M2.5 7.5H5M6.5 7.5H10.5" stroke="#333" stroke-width="1.2"/></svg>
<span class="t" style="left:1168.00px;top:309.36px;color:#1e1e1e;font-size:10.3px;transform:scaleX(0.9578)">FormLapPDT_Them.cs</span>
<svg class="a" style="left:1133.0px;top:328.37px;" width="6" height="8" viewBox="0 0 6 8"><path d="M0.7 0.8 4.6 4 0.7 7.2Z" fill="#fff" stroke="#1e1e1e" stroke-width="1.1"/></svg>
<svg class="a" style="left:1150.5px;top:326.87px;" width="13" height="11" viewBox="0 0 13 11"><rect x="0.6" y="0.6" width="11.8" height="9.8" fill="#fff" stroke="#333" stroke-width="1.2"/><path d="M0.6 2.3H12.4" stroke="#333" stroke-width="1.6"/><path d="M2.5 5H5M6.5 5H10.5M2.5 7.5H5M6.5 7.5H10.5" stroke="#333" stroke-width="1.2"/></svg>
<span class="t" style="left:1168.00px;top:324.82px;color:#1e1e1e;font-size:10.3px;transform:scaleX(1.0)">FormMain.cs</span>
<svg class="a" style="left:1133.0px;top:343.83000000000004px;" width="6" height="8" viewBox="0 0 6 8"><path d="M0.7 0.8 4.6 4 0.7 7.2Z" fill="#fff" stroke="#1e1e1e" stroke-width="1.1"/></svg>
<svg class="a" style="left:1150.5px;top:342.33000000000004px;" width="13" height="11" viewBox="0 0 13 11"><rect x="0.6" y="0.6" width="11.8" height="9.8" fill="#fff" stroke="#333" stroke-width="1.2"/><path d="M0.6 2.3H12.4" stroke="#333" stroke-width="1.6"/><path d="M2.5 5H5M6.5 5H10.5M2.5 7.5H5M6.5 7.5H10.5" stroke="#333" stroke-width="1.2"/></svg>
<span class="t" style="left:1168.00px;top:340.28px;color:#1e1e1e;font-size:10.3px;transform:scaleX(1.0468)">formMonAn.cs</span>
<svg class="a" style="left:1132.5px;top:360.78999999999996px;" width="6" height="6" viewBox="0 0 6 6"><path d="M6 0V6H0Z" fill="#1e1e1e"/></svg>
<svg class="a" style="left:1150.5px;top:357.78999999999996px;" width="13" height="11" viewBox="0 0 13 11"><rect x="0.6" y="0.6" width="11.8" height="9.8" fill="#fff" stroke="#333" stroke-width="1.2"/><path d="M0.6 2.3H12.4" stroke="#333" stroke-width="1.6"/><path d="M2.5 5H5M6.5 5H10.5M2.5 7.5H5M6.5 7.5H10.5" stroke="#333" stroke-width="1.2"/></svg>
<span class="t" style="left:1168.00px;top:355.74px;color:#1e1e1e;font-size:10.3px;transform:scaleX(0.998)">formPhieuDatTiec.cs</span>
<svg class="a" style="left:1148.5px;top:374.75px;" width="6" height="8" viewBox="0 0 6 8"><path d="M0.7 0.8 4.6 4 0.7 7.2Z" fill="#fff" stroke="#1e1e1e" stroke-width="1.1"/></svg>
<svg class="a" style="left:1166.0px;top:372.75px;" width="12" height="12" viewBox="0 0 12 12"><path d="M3.5 2.5H8.5L10.8 4.8V11.4H3.5Z" fill="#fff" stroke="#333" stroke-width="1"/><path d="M0.3 2.2H5M3.2 0.3 5.2 2.2 3.2 4.1" stroke="#1a4f8f" stroke-width="1.3" fill="none"/></svg>
<span class="t" style="left:1183.50px;top:371.20px;color:#1e1e1e;font-size:10.3px;transform:scaleX(0.9878)">formPhieuDatTiec.Designer.cs</span>
<svg class="a" style="left:1166.0px;top:388.21000000000004px;" width="12" height="12" viewBox="0 0 12 12"><path d="M3.5 2.5H8.5L10.8 4.8V11.4H3.5Z" fill="#fff" stroke="#333" stroke-width="1"/><path d="M0.3 2.2H5M3.2 0.3 5.2 2.2 3.2 4.1" stroke="#1a4f8f" stroke-width="1.3" fill="none"/></svg>
<span class="t" style="left:1183.50px;top:386.66px;color:#1e1e1e;font-size:10.3px;transform:scaleX(0.9871)">formPhieuDatTiec.resx</span>
<svg class="a" style="left:1148.5px;top:405.66999999999996px;" width="6" height="8" viewBox="0 0 6 8"><path d="M0.7 0.8 4.6 4 0.7 7.2Z" fill="#fff" stroke="#1e1e1e" stroke-width="1.1"/></svg>
<svg class="a" style="left:1166.0px;top:403.66999999999996px;" width="13" height="13" viewBox="0 0 13 13"><path d="M3.7 0 7.4 3.7 3.7 7.4 0 3.7Z" fill="#c98d31"/><path d="M5.5 4.8H8M6.7 4.8V10H8.2" stroke="#b07a28" stroke-width="1.1" fill="none"/><path d="M10.2 2.6 12.6 5 10.2 7.4 7.8 5Z M10.2 7.6 12.6 10 10.2 12.4 7.8 10Z" fill="#c98d31"/></svg>
<span class="t" style="left:1183.50px;top:402.12px;color:#1e1e1e;font-size:10.3px;transform:scaleX(1.0118)">formPhieuDatTiec</span>
<svg class="a" style="left:1133.0px;top:421.13px;" width="6" height="8" viewBox="0 0 6 8"><path d="M0.7 0.8 4.6 4 0.7 7.2Z" fill="#fff" stroke="#1e1e1e" stroke-width="1.1"/></svg>
<svg class="a" style="left:1150.5px;top:419.63px;" width="13" height="11" viewBox="0 0 13 11"><rect x="0.6" y="0.6" width="11.8" height="9.8" fill="#fff" stroke="#333" stroke-width="1.2"/><path d="M0.6 2.3H12.4" stroke="#333" stroke-width="1.6"/><path d="M2.5 5H5M6.5 5H10.5M2.5 7.5H5M6.5 7.5H10.5" stroke="#333" stroke-width="1.2"/></svg>
<span class="t" style="left:1168.00px;top:417.58px;color:#1e1e1e;font-size:10.3px;transform:scaleX(1.0259)">formThucDon.cs</span>
</div></div>
<div class="a" style="left:1357.5px;top:134.5px;width:17.4px;height:291.5px;background:#e8e8ec;"></div>
<svg class="a" style="left:1362px;top:142px;" width="8" height="5" viewBox="0 0 8 5"><path d="M4 0 8 5H0Z" fill="#868999"/></svg>
<svg class="a" style="left:1362px;top:415px;" width="8" height="5" viewBox="0 0 8 5"><path d="M4 5 8 0H0Z" fill="#868999"/></svg>
<div class="a" style="left:1362.7px;top:182.5px;width:7.5px;height:178.5px;background:#c2c3c9;"></div>
<div class="a" style="left:1107.8px;top:426px;width:86.2px;height:17.5px;background:#fff;"></div>
<span class="t" style="left:1112.50px;top:426.95px;color:#1e1e1e;font-size:10.3px;transform:scaleX(0.9819)">Solution Explorer</span>
<div class="a" style="left:1194px;top:427.5px;width:74px;height:16px;background:#4d6082;"></div>
<span class="t" style="left:1199.00px;top:427.45px;color:#fff;font-size:10.3px;transform:scaleX(0.9791)">Team Explorer</span>
<div class="a" style="left:1107.8px;top:449.5px;width:267.1px;height:18.5px;background:#4d6082;border:1px solid #5f7299;border-bottom:0"></div>
<span class="t" style="left:1112.00px;top:451.95px;color:#fff;font-size:10.3px;transform:scaleX(0.98)">Properties</span>
<svg class="a" style="left:1331.5px;top:457.5px;" width="8" height="4" viewBox="0 0 8 4"><path d="M0 0H8L4.0 4Z" fill="#fff"/></svg>
<svg class="a" style="left:1345.5px;top:454px;" width="8" height="11" viewBox="0 0 8 11"><path d="M2 0.5H6V5.5H2ZM5 0.5V5.5M0.5 6H7.5M4 6V10.5" stroke="#fff" stroke-width="1" fill="none"/></svg>
<svg class="a" style="left:1359.5px;top:455px;" width="9" height="9" viewBox="0 0 9 9"><path d="M0.7 0.7 8.3 8.3M8.3 0.7 0.7 8.3" stroke="#fff" stroke-width="1.3"/></svg>
<div class="a" style="left:1107.8px;top:467.8px;width:267.1px;height:22.5px;background:#fff;"></div>
<svg class="a" style="left:1365.3px;top:477.5px;" width="5" height="3" viewBox="0 0 5 3"><path d="M0 0H5L2.5 3Z" fill="#1e1e1e"/></svg>
<div class="a" style="left:1107.8px;top:490px;width:267.1px;height:21.3px;background:#cfd6e5;"></div>
<div class="a" style="left:1107.8px;top:511px;width:267.1px;height:205px;background:#fff;"></div>
<div class="a" style="left:1107.8px;top:661px;width:267.1px;height:1px;background:#eeeef2;"></div>
<svg class="a" style="left:1114px;top:494px;" width="13" height="12" viewBox="0 0 13 12"><rect x="0" y="0" width="5" height="5" fill="#1e1e1e"/><rect x="1.7" y="1.7" width="1.6" height="1.6" fill="#fff"/><rect x="0" y="7" width="5" height="5" fill="#1e1e1e"/><rect x="1.7" y="8.7" width="1.6" height="1.6" fill="#fff"/><path d="M6 0.5H10M6 2.5H10M6 4.5H10M6 7.5H10M6 9.5H10M6 11.5H10" stroke="#3a3a3a" stroke-width="1"/><path d="M11.5 2V6M11.5 7.5V9M11.5 10.5V12" stroke="#1e1e1e" stroke-width="1.2"/></svg>
<div class="a" style="left:1130.6px;top:490.4px;width:20px;height:19.1px;background:#fdf4bf;border:1px solid #eedb8e;border-radius:1.5px"></div>
<div class="a" style="left:1134px;top:494px;width:6.2px;height:6px;background:#1e1e1e;"></div>
<span class="t" style="left:1134.50px;top:489.45px;color:#fff;font-size:6.5px;transform:scaleX(1.1056);font-weight:bold">A</span>
<span class="t" style="left:1134.10px;top:496.65px;color:#1e1e1e;font-size:7.5px;transform:scaleX(1.3061);font-weight:bold">Z</span>
<svg class="a" style="left:1140.5px;top:496px;" width="7" height="10" viewBox="0 0 7 10"><path d="M3.5 0V8M0.8 5.2 3.5 8.3 6.2 5.2" stroke="#1a4f8f" stroke-width="2" fill="none"/></svg>
<div class="a" style="left:1153.2px;top:492px;width:1px;height:17.2px;background:#8a94ab;"></div>
<svg class="a" style="left:1161px;top:494.8px;" width="10" height="10" viewBox="0 0 12 12"><path d="M1.2 10.8 6.3 5.7" stroke="#a3a7b4" stroke-width="2.4" stroke-linecap="round"/><path d="M11.5 2.6 9.6 4.5 7.5 2.4 9.4 0.5A3.3 3.3 0 1 0 11.5 2.6Z" fill="#a3a7b4"/></svg>
<div class="a" style="left:0px;top:720.7px;width:1380px;height:20.8px;background:#007acc;"></div>
<span class="t" style="left:3.50px;top:723.95px;color:#fff;font-size:10.3px;transform:scaleX(0.9407)">Ready</span>
<span class="t" style="left:724.00px;top:723.95px;color:#fff;font-size:10.3px;transform:scaleX(0.9697)">Ln 65</span>
<span class="t" style="left:804.00px;top:723.95px;color:#fff;font-size:10.3px;transform:scaleX(0.9743)">Col 10</span>
<span class="t" style="left:883.50px;top:723.95px;color:#fff;font-size:10.3px;transform:scaleX(0.9278)">Ch 10</span>
<span class="t" style="left:1000.00px;top:723.95px;color:#fff;font-size:10.3px;transform:scaleX(0.99)">INS</span>
<svg class="a" style="left:1304.5px;top:726px;" width="9" height="11" viewBox="0 0 9 11"><path d="M4.5 1V11M0.8 5 4.5 1.2 8.2 5" stroke="#fff" stroke-width="1.6" fill="none"/></svg>
<span class="t" style="left:1321.00px;top:723.95px;color:#fff;font-size:10.3px;transform:scaleX(1.0213)">Publish</span>
<svg class="a" style="left:1360px;top:729px;" width="7" height="4" viewBox="0 0 7 4"><path d="M3.5 0 7 4H0Z" fill="#fff"/></svg>
<svg class="a" style="left:0;top:741.5px" width="1380" height="34.5" viewBox="0 0 1380 34.5"><defs><linearGradient id="tbg" x1="0" x2="1380" y1="0" y2="0" gradientUnits="userSpaceOnUse"><stop offset="0" stop-color="#3a88c8"/><stop offset="0.22" stop-color="#3d8dcd"/><stop offset="0.5" stop-color="#4595d3"/><stop offset="0.66" stop-color="#3b8acb"/><stop offset="0.69" stop-color="#2f7cc0"/><stop offset="0.725" stop-color="#25659f"/><stop offset="0.76" stop-color="#225c95"/><stop offset="1" stop-color="#1f558b"/></linearGradient><filter id="bl" x="-20%" y="-50%" width="140%" height="200%"><feGaussianBlur stdDeviation="2.2"/></filter></defs><rect width="1380" height="34.5" fill="url(#tbg)"/><path d="M900 36L925 -2H936Q968 8 992 36Z" fill="#2f7fc4" filter="url(#bl)" opacity=".9"/><path d="M926 -1Q962 8 990 36" stroke="#d6ebfa" stroke-width="6" fill="none" filter="url(#bl)" opacity=".75"/></svg>
<div class="a" style="left:0;top:741.5px;width:1380px;height:34.5px;background:linear-gradient(180deg,rgba(255,255,255,.35) 0,rgba(255,255,255,.12) 1.5px,rgba(255,255,255,0) 12px,rgba(0,20,60,.10) 34px)"></div>
<div class="a" style="left:0px;top:741.2px;width:1380px;height:1px;background:rgba(10,40,80,.55);"></div>
<div class="a" style="left:159px;top:741.9px;width:50px;height:35px;border:1px solid rgba(20,50,90,.6);border-bottom:0;border-radius:3px 3px 0 0;background:linear-gradient(180deg,rgba(255,255,255,.5) 0,rgba(255,255,255,.26) 55%,rgba(255,255,255,.36) 100%);box-shadow:inset 0 0 0 1px rgba(255,255,255,.45)"></div>
<div class="a" style="left:211.5px;top:741.9px;width:50.5px;height:35px;border:1px solid rgba(20,50,90,.6);border-bottom:0;border-radius:3px 3px 0 0;background:linear-gradient(180deg,rgba(255,255,255,.5) 0,rgba(255,255,255,.26) 55%,rgba(255,255,255,.36) 100%);box-shadow:inset 0 0 0 1px rgba(255,255,255,.45)"></div>
<div class="a" style="left:269px;top:741.9px;width:47.5px;height:35px;border:1px solid rgba(20,50,90,.6);border-bottom:0;border-radius:3px 3px 0 0;background:linear-gradient(180deg,rgba(255,255,255,.7) 0,rgba(255,255,255,.26) 55%,rgba(255,255,255,.36) 100%);box-shadow:inset 0 0 0 1px rgba(255,255,255,.45)"></div>
<div class="a" style="left:265px;top:741.9px;width:47px;height:35px;border:1px solid rgba(20,50,90,.6);border-bottom:0;border-radius:3px 3px 0 0;background:linear-gradient(180deg,rgba(255,255,255,.7) 0,rgba(255,255,255,.26) 55%,rgba(255,255,255,.36) 100%);box-shadow:inset 0 0 0 1px rgba(255,255,255,.45)"></div>
<div class="a" style="left:319px;top:741.9px;width:50.5px;height:35px;border:1px solid rgba(20,50,90,.6);border-bottom:0;border-radius:3px 3px 0 0;background:linear-gradient(180deg,rgba(255,255,255,.5) 0,rgba(255,255,255,.26) 55%,rgba(255,255,255,.36) 100%);box-shadow:inset 0 0 0 1px rgba(255,255,255,.45)"></div>
<svg class="a" style="left:6px;top:742px;" width="34" height="34" viewBox="0 0 34 34"><defs><radialGradient id="og" cx="50%" cy="75%" r="75%"><stop offset="0" stop-color="#58b6ee"/><stop offset="0.5" stop-color="#2468ae"/><stop offset="1" stop-color="#123766"/></radialGradient><linearGradient id="og2" x1="0" y1="0" x2="0" y2="1"><stop offset="0" stop-color="#fff" stop-opacity=".75"/><stop offset="1" stop-color="#fff" stop-opacity=".08"/></linearGradient></defs><circle cx="17" cy="17" r="16" fill="url(#og)" stroke="#cfe8f8" stroke-width="1.1" stroke-opacity=".8"/><path d="M3 13A14.5 14.5 0 0 1 31 13Q17 19 3 13Z" fill="url(#og2)"/><path d="M8.5 9.5Q12.5 7 16 9.5L14.8 16Q11.3 14 7.3 16Z" fill="#e8542a"/><path d="M17.5 10Q21.5 12 26 9.5L24.8 16Q20.8 18.3 16.3 16.5Z" fill="#8cc63e"/><path d="M7 17.5Q10.8 15.5 14.5 17.5L13.3 24Q9.6 22 5.8 24Z" fill="#3fa4e8"/><path d="M16 18Q20 20 24.5 17.5L23.3 24Q19.3 26.3 14.8 24.5Z" fill="#fbc531"/></svg>
<svg class="a" style="left:64px;top:748px;" width="25" height="23" viewBox="0 0 25 23"><rect x="1.5" y="1.5" width="21" height="19" fill="#8cc4ea" stroke="#cfe6f6" stroke-width="1"/><rect x="19" y="2" width="3.5" height="18" fill="#b8daf2"/><circle cx="10.5" cy="11" r="8" fill="#ee8a22" stroke="#f9c88c" stroke-width="1.3"/><path d="M7.8 6.5 15.3 11 7.8 15.5Z" fill="#fff"/></svg>
<svg class="a" style="left:115px;top:744px;" width="30" height="31" viewBox="0 0 30 31"><circle cx="14.5" cy="16" r="13" fill="#4aa63c" stroke="#eaf6e6" stroke-width="1.5"/><path d="M14.5 16 18.5 1.5 29 1.5 29 10.5Z" fill="#f4faf2"/><circle cx="14.5" cy="16" r="6.4" fill="none" stroke="#fff" stroke-width="2.5"/><circle cx="14.5" cy="16" r="3.1" fill="#4aa63c"/><path d="M18.3 9.5 19.8 3M20.8 11 25.5 5.5M22.5 13.5 28 10.5" stroke="#e8641a" stroke-width="2.2" stroke-linecap="round"/></svg>
<svg class="a" style="left:170px;top:746px;" width="30" height="30" viewBox="0 0 30 30"><circle cx="13" cy="13" r="12" fill="#db4437"/><path d="M13 13 2.6 7A12 12 0 0 0 7.5 23.7Z" fill="#0f9d58"/><path d="M13 13 7.5 23.7A12 12 0 0 0 24.8 11H13Z" fill="#f4c20d"/><path d="M13 13 2.6 7A12 12 0 0 0 8 24L13 13Z" fill="#0f9d58"/><circle cx="13" cy="13" r="5.4" fill="#fff"/><circle cx="13" cy="13" r="4.2" fill="#4285f4"/><rect x="15" y="15" width="13" height="13" fill="#d9d9d9" stroke="#f5f5f5" stroke-width="0.8"/><circle cx="21.5" cy="19.5" r="2.2" fill="#8a8a8a"/><path d="M17.5 27V25.5Q17.5 23 21.5 23Q25.5 23 25.5 25.5V27Z" fill="#8a8a8a"/></svg>
<svg class="a" style="left:222px;top:744px;" width="32" height="32" viewBox="0 0 32 32"><path d="M2 3V11Q6 13.5 10 11V3" fill="#e8b830"/><ellipse cx="6" cy="3" rx="4" ry="1.8" fill="#f7dc7a"/><path d="M15 4.5H26V15M4 17V28H13" stroke="#2f9a3f" stroke-width="2" fill="none" stroke-dasharray="2.2 1.6"/><path d="M12 29 25 16" stroke="#c8a060" stroke-width="2.6"/><path d="M29 29 16 17" stroke="#8a8f98" stroke-width="2.6"/><path d="M13 15 19 12.5 22.5 16 18 20Z" fill="#5a5f68"/><path d="M21 13.5Q25 11 28.5 14L25.5 18Z" fill="#9aa0aa"/></svg>
<svg class="a" style="left:275px;top:744.5px;" width="26" height="28" viewBox="0 0 26 28"><path d="M0 11.5 19.5 0 26 3V27.5H0Z" fill="#68217a"/><path d="M19 4.5 23.5 6.5V20.5L19 22.5 8.3 14.6 4.3 17.6 2.3 16.6V10.4L4.3 9.4 8.3 12.4Z M19 9.8 13 13.5 19 17.2Z M4.3 11.6V15.4L6.6 13.5Z" fill="#fff" fill-rule="evenodd"/></svg>
<svg class="a" style="left:329px;top:746px;" width="32" height="30" viewBox="0 0 32 30"><path d="M2 4H11L13 6.5H27V22H2Z" fill="#e9c860" stroke="#f7e7a8" stroke-width="1"/><path d="M2 9H27V22H2Z" fill="#f5dc82"/><rect x="5" y="2.5" width="3" height="2" fill="#3b9b46"/><rect x="15" y="4.5" width="3" height="2" fill="#d9402e"/><rect x="20" y="4.5" width="3" height="2" fill="#3a7fd0"/><path d="M8 17H22V24H25V28H5V24H8Z" fill="#8ec3ea" stroke="#d8ecf9" stroke-width="1"/><rect x="10" y="19" width="10" height="3" fill="#5a9fd4"/></svg>
<span class="t" style="left:1011.00px;top:748.95px;color:#fff;font-size:10.3px;transform:scaleX(0.9083)">EN</span>
<svg class="a" style="left:1037px;top:751px;" width="16" height="16" viewBox="0 0 16 16"><circle cx="5.5" cy="9" r="4.2" fill="#3f7fd0" stroke="#dfe9f7" stroke-width="1"/><path d="M10 3Q14 9 10 15M12.5 2Q17 9 12.5 16" stroke="#e8b84a" stroke-width="1.6" fill="none"/></svg>
<svg class="a" style="left:1058px;top:751px;" width="16" height="16" viewBox="0 0 16 16"><circle cx="7" cy="4" r="3" fill="#4a3626"/><path d="M2 13Q2 7.5 7 7.5Q12 7.5 12 13Z" fill="#3f7fd0"/><rect x="7.5" y="10" width="8" height="5.5" fill="#e9eef5" stroke="#fff" stroke-width=".6"/></svg>
<svg class="a" style="left:1078px;top:751px;" width="16" height="16" viewBox="0 0 16 16"><rect x="5" y="1.5" width="8" height="8" rx="1.5" fill="#1e1e1e" stroke="#fff" stroke-width="1.4"/><rect x="1.5" y="5.5" width="8" height="8" rx="1.5" fill="#1e1e1e" stroke="#fff" stroke-width="1.4"/></svg>
<svg class="a" style="left:1098px;top:751px;" width="16" height="16" viewBox="0 0 16 16"><rect x="1" y="1.5" width="14" height="13" rx="1" fill="#f3e9f7" stroke="#7b2b94" stroke-width="1.3"/><path d="M4.8 12V4L11.2 12V4" stroke="#7b2b94" stroke-width="1.7" fill="none"/></svg>
<svg class="a" style="left:1118px;top:751px;" width="16" height="16" viewBox="0 0 16 16"><path d="M1.5 5.5H5L10 1V15L5 10.5H1.5Z" fill="#d9402e" stroke="#f3c9bd" stroke-width=".8"/><path d="M12 4.5Q14.5 8 12 11.5" stroke="#b8c3d0" stroke-width="1.2" fill="none"/></svg>
<svg class="a" style="left:1139px;top:751px;" width="16" height="16" viewBox="0 0 16 16"><path d="M2 15Q0 8 5 6L8 1 10 6Q16 6 14 15Z" fill="#f0a320"/><path d="M7 8.5 11 14H3Z" fill="#ffe27a" stroke="#a86a10" stroke-width=".8"/></svg>
<svg class="a" style="left:1160px;top:751px;" width="16" height="16" viewBox="0 0 16 16"><rect x="0.5" y="0.5" width="15" height="15" rx="2" fill="#f08a24"/><path d="M4 11.5H12M5 9Q8 7 11 9M6 6.5Q7 4 6 2.5M9 6.5Q10 4 9 2.5" stroke="#fff" stroke-width="1.2" fill="none"/></svg>
<svg class="a" style="left:1180px;top:751px;" width="16" height="16" viewBox="0 0 16 16"><ellipse cx="8" cy="6.5" rx="7" ry="5.5" fill="#3e9a3c"/><circle cx="10.5" cy="5" r="3" fill="#3f7fd0"/><path d="M1 11.5H15L8 15.5Z" fill="#e8c530"/></svg>
<svg class="a" style="left:1201px;top:751px;" width="16" height="16" viewBox="0 0 16 16"><rect x="0.5" y="0.5" width="15" height="15" fill="#f5e9ea" stroke="#fff" stroke-width="1"/><path d="M3 3.5 8 13 13 3.5" stroke="#c8222b" stroke-width="2.6" fill="none"/></svg>
<svg class="a" style="left:1222px;top:751px;" width="16" height="16" viewBox="0 0 16 16"><rect x="0.5" y="0.5" width="15" height="13" fill="#3f9bd8" stroke="#d8ecf9" stroke-width="1"/><path d="M3 3.5H7V7H3ZM9 3H13M9 5.5H13M3 9.5H13" stroke="#fff" stroke-width="1.2" fill="none"/><rect x="3" y="13.5" width="10" height="2.5" fill="#8fd06a"/></svg>
<svg class="a" style="left:1243px;top:751px;" width="16" height="16" viewBox="0 0 16 16"><rect x="4" y="4" width="10" height="8" fill="#1e1e1e" stroke="#fff" stroke-width="1.3"/><path d="M6 15H12M9 12V15" stroke="#fff" stroke-width="1.3"/><path d="M1 1H5V6H1Z" fill="#fff" stroke="#1e1e1e" stroke-width=".8"/></svg>
<svg class="a" style="left:1264px;top:751px;" width="16" height="16" viewBox="0 0 16 16"><path d="M2.5 1V15.5" stroke="#fff" stroke-width="1.6"/><path d="M3.5 1.5H12.5V8.5H3.5Z" fill="#fff" stroke="#1e1e1e" stroke-width=".7"/><circle cx="11" cy="11" r="4.3" fill="#d9402e"/><path d="M9 9 13 13M13 9 9 13" stroke="#fff" stroke-width="1.4"/></svg>
<svg class="a" style="left:1285px;top:751px;" width="16" height="16" viewBox="0 0 16 16"><path d="M1.5 5.5H4.5L9 1.5V14.5L4.5 10.5H1.5Z" fill="#fff"/><path d="M11 5Q13 8 11 11M13 3Q16.5 8 13 13" stroke="#fff" stroke-width="1.2" fill="none"/></svg>
<span class="t" style="left:1316.00px;top:744.95px;color:#fff;font-size:10.3px;transform:scaleX(0.9529)">10:04 PM</span>
<span class="t" style="left:1311.50px;top:759.95px;color:#fff;font-size:10.3px;transform:scaleX(0.9945)">11/24/2017</span>
<div class="a" style="left:1368.5px;top:742px;width:11.5px;height:34px;border:1px solid rgba(10,30,60,.7);border-right:0;background:linear-gradient(180deg,rgba(255,255,255,.2),rgba(255,255,255,.05));box-shadow:inset 1px 1px 0 rgba(255,255,255,.4)"></div>
</body></html>
